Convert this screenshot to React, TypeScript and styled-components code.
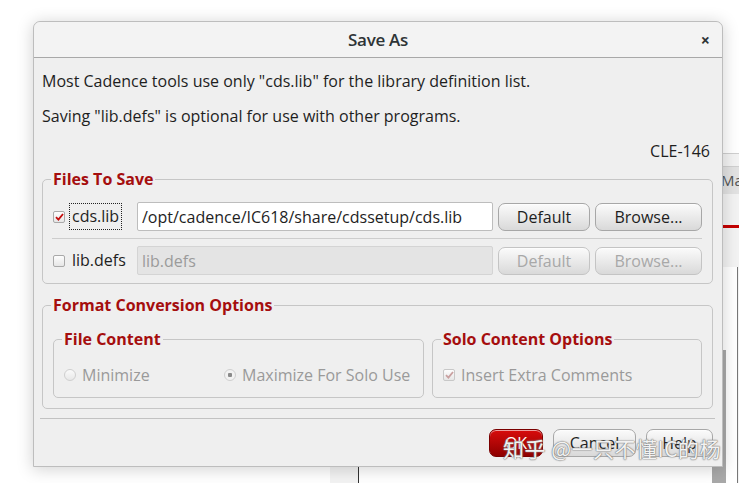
import styled, { createGlobalStyle } from 'styled-components';

const GlobalStyle = createGlobalStyle`
  html, body {
    margin: 0;
    padding: 0;
    background: #ffffff;
    overflow: hidden;
  }
  body {
    font-family: "Open Sans", "Noto Sans", sans-serif;
  }
`;

const Desktop = styled.div`
  position: relative;
  width: 739px;
  height: 483px;
  overflow: hidden;
  background: #ffffff;
`;

/* window behind the dialog, only its edges show */
const BackWindow = styled.div`
  position: absolute;
  left: 330px;
  top: 153px;
  width: 430px;
  height: 350px;
  background: #f3f3f3;
  border-top: 1px solid #cfcfcf;
  display: flex;
  flex-direction: column;
`;

const BackTabs = styled.div`
  display: flex;
  justify-content: flex-end;
  padding-top: 12px;
  height: 28px;
`;

const BackTab = styled.div`
  width: 120px;
  margin-right: -82px;
  background: #e2e2e2;
  border: 1px solid #d0d0d0;
  border-bottom: none;
  color: #555;
  font-size: 15px;
  line-height: 26px;
  padding-left: 1px;
`;

const BackRedLine = styled.div`
  height: 3px;
  margin-top: 31px;
  margin-left: 380px;
  background: #c40000;
`;

const BackList = styled.div`
  margin: 39px 0 0 28px;
  width: 378px;
  flex: 1;
  background: #ffffff;
  border-left: 1px solid #333;
  border-right: 1px solid #777;
  display: flex;
`;

const BackListItems = styled.div`
  flex: 1;
  padding: 180px 0 0 4px;
  font-size: 16px;
  line-height: 20px;
  color: #222;
`;

const BackScroll = styled.div`
  width: 14px;
  margin-right: 11px;
  background: #a9a9a9;
  margin-top: 83px;
`;

const Dialog = styled.div`
  position: absolute;
  left: 33px;
  top: 21px;
  width: 688px;
  background: #efefef;
  border: 1px solid #bdbdbd;
  border-radius: 7px 7px 0 0;
  box-shadow: 0 2px 16px 1px rgba(0, 0, 0, 0.17);
  display: flex;
  flex-direction: column;
`;

const TitleBar = styled.div`
  height: 35px;
  display: grid;
  grid-template-columns: 1fr auto 1fr;
  align-items: center;
  background: #f3f3f3;
  border-bottom: 1px solid #a8a8a8;
  border-radius: 7px 7px 0 0;
`;

const Title = styled.div`
  grid-column: 2;
  font-size: 17px;
  font-weight: 600;
  letter-spacing: -0.3px;
  color: #2e3436;
`;

const CloseButton = styled.div`
  justify-self: end;
  margin-right: 12px;
  font-size: 16px;
  font-weight: 700;
  color: #2e3436;
`;

const Body = styled.div`
  padding: 12px 9px 0 8px;
  display: flex;
  flex-direction: column;
`;

const Message = styled.div<{ $right?: boolean; $gap: number }>`
  font-size: 16px;
  line-height: 22px;
  color: #1e1e1e;
  text-align: ${(p) => (p.$right ? 'right' : 'left')};
  padding-right: ${(p) => (p.$right ? '3px' : '0')};
  margin-bottom: ${(p) => p.$gap}px;
`;

const Group = styled.fieldset<{ $pad: string }>`
  margin: 0;
  min-width: 0;
  border: 1px solid #c6c6c6;
  border-radius: 5px;
  padding: ${(p) => p.$pad};
`;

const Legend = styled.legend`
  padding: 0 2px;
  margin-left: -2px;
  font-size: 16px;
  font-weight: 700;
  line-height: 22px;
  color: #a50e0e;
`;

const FileRow = styled.div`
  display: grid;
  grid-template-columns: 79px 356px 92px 1fr;
  column-gap: 5px;
  align-items: center;
  height: 29px;
`;

const RowRule = styled.div`
  height: 1px;
  background: #cdcdcd;
  margin: 7px 0 7px -1px;
`;

const CheckLabel = styled.label<{ $disabled?: boolean }>`
  display: flex;
  align-items: center;
  gap: 4px;
  font-size: 16px;
  color: ${(p) => (p.$disabled ? '#9a9a9a' : '#1e1e1e')};
  white-space: nowrap;
`;

const Box = styled.span<{ $dim?: boolean }>`
  width: 10px;
  height: 10px;
  flex: none;
  border: 1px solid ${(p) => (p.$dim ? '#c8c8c8' : '#a9a9a9')};
  border-radius: 2px;
  background: linear-gradient(#fdfdfd, #e6e6e6);
  display: flex;
  align-items: center;
  justify-content: center;
`;

const Focus = styled.span<{ $focus?: boolean }>`
  padding: 2px 2px;
  line-height: 21px;
  border: 1px dotted ${(p) => (p.$focus ? '#222' : 'transparent')};
`;

const TextField = styled.div<{ $disabled?: boolean }>`
  box-sizing: border-box;
  height: 29px;
  padding: 0 4px;
  display: flex;
  align-items: center;
  font-size: 16px;
  color: ${(p) => (p.$disabled ? '#9b9b9b' : '#1e1e1e')};
  background: ${(p) => (p.$disabled ? '#e4e4e4' : '#ffffff')};
  border: 1px solid ${(p) => (p.$disabled ? '#d4d4d4' : '#bdbdbd')};
  border-radius: 2px;
  white-space: nowrap;
  overflow: hidden;
`;

const Button = styled.button<{ $disabled?: boolean; $primary?: boolean }>`
  height: 28px;
  box-sizing: border-box;
  padding: 0 14px;
  font-family: inherit;
  font-size: 16px;
  color: ${(p) => (p.$primary ? '#ffffff' : p.$disabled ? '#a8a8a8' : '#1e1e1e')};
  background: ${(p) =>
    p.$primary
      ? 'linear-gradient(#d80c0c, #8e0000)'
      : 'linear-gradient(#fbfbfb, #d9d9d9)'};
  border: 1px solid ${(p) => (p.$primary ? '#7a0000' : p.$disabled ? '#c4c4c4' : '#a7a7a7')};
  border-radius: 7px;
  box-shadow: inset 0 1px 0 rgba(255, 255, 255, 0.6);
  white-space: nowrap;
`;

const FooterButton = styled(Button)<{ $w: number }>`
  width: ${(p) => p.$w}px;
  padding: 0;
`;

const GroupGap = styled.div`
  height: 10px;
`;

const SubGroups = styled.div`
  display: grid;
  grid-template-columns: 371px 1fr;
  column-gap: 8px;
`;

const OptionRow = styled.div`
  display: flex;
  align-items: center;
  height: 22px;
`;

const RadioLabel = styled.label<{ $width?: number }>`
  display: flex;
  align-items: center;
  gap: 6px;
  width: ${(p) => (p.$width ? `${p.$width}px` : 'auto')};
  font-size: 16px;
  color: #9a9a9a;
  white-space: nowrap;
`;

const Radio = styled.span<{ $on?: boolean }>`
  width: 10px;
  height: 10px;
  flex: none;
  border-radius: 50%;
  border: 1px solid #cfcfcf;
  background: ${(p) =>
    p.$on
      ? 'radial-gradient(circle, #8a8a8a 0 2px, #f2f2f2 2.5px)'
      : 'linear-gradient(#fafafa, #e8e8e8)'};
`;

const Footer = styled.div`
  margin: 9px -2px 0 -2px;
  border-top: 1px solid #c2c2c2;
  padding: 10px 2px 9px 0;
  display: flex;
  justify-content: flex-end;
  gap: 10px;
`;

const Watermark = styled.div`
  position: absolute;
  left: 503px;
  top: 433px;
  font-family: "Noto Sans CJK SC", "Open Sans", sans-serif;
  font-size: 21px;
  letter-spacing: 0.5px;
  color: rgba(255, 255, 255, 0.92);
  text-shadow: 0 0 1px #777, 0 0 1px #777, 0 0 2px #999;
  white-space: nowrap;
  pointer-events: none;
`;

const Tick = ({ color }: { color: string }) => (
  <svg width="9" height="8" viewBox="0 0 9 8">
    <path d="M1 4.2 L3.4 6.6 L8 1" fill="none" stroke={color} strokeWidth="1.8" />
  </svg>
);

export default function App() {
  return (
    <Desktop>
      <GlobalStyle />
      <BackWindow>
        <BackTabs>
          <BackTab>Manager</BackTab>
        </BackTabs>
        <BackRedLine />
        <BackList>
          <BackListItems>cdsDefTechLib</BackListItems>
          <BackScroll />
        </BackList>
      </BackWindow>

      <Dialog>
        <TitleBar>
          <Title>Save As</Title>
          <CloseButton>×</CloseButton>
        </TitleBar>
        <Body>
          <Message $gap={13}>Most Cadence tools use only "cds.lib" for the library definition list.</Message>
          <Message $gap={13}>Saving "lib.defs" is optional for use with other programs.</Message>
          <Message $right $gap={6}>CLE-146</Message>

          <Group $pad="12px 10px 8px 10px">
            <Legend>Files To Save</Legend>
            <FileRow>
              <CheckLabel>
                <Box>
                  <Tick color="#c40d0d" />
                </Box>
                <Focus $focus>cds.lib</Focus>
              </CheckLabel>
              <TextField>/opt/cadence/IC618/share/cdssetup/cds.lib</TextField>
              <Button>Default</Button>
              <Button>Browse...</Button>
            </FileRow>
            <RowRule />
            <FileRow>
              <CheckLabel>
                <Box />
                <Focus>lib.defs</Focus>
              </CheckLabel>
              <TextField $disabled>lib.defs</TextField>
              <Button $disabled>Default</Button>
              <Button $disabled>Browse...</Button>
            </FileRow>
          </Group>

          <GroupGap />

          <Group $pad="12px 10px 10px 10px">
            <Legend>Format Conversion Options</Legend>
            <SubGroups>
              <Group $pad="14px 10px 11px 10px">
                <Legend>File Content</Legend>
                <OptionRow>
                  <RadioLabel $width={160}>
                    <Radio />
                    Minimize
                  </RadioLabel>
                  <RadioLabel>
                    <Radio $on />
                    Maximize For Solo Use
                  </RadioLabel>
                </OptionRow>
              </Group>
              <Group $pad="14px 10px 11px 10px">
                <Legend>Solo Content Options</Legend>
                <OptionRow>
                  <RadioLabel>
                    <Box $dim>
                      <Tick color="#c9a0a0" />
                    </Box>
                    Insert Extra Comments
                  </RadioLabel>
                </OptionRow>
              </Group>
            </SubGroups>
          </Group>

          <Footer>
            <FooterButton $primary $w={54}>OK</FooterButton>
            <FooterButton $w={83}>Cancel</FooterButton>
            <FooterButton $w={67}>Help</FooterButton>
          </Footer>
        </Body>
      </Dialog>

      <Watermark>知乎 @一只不懂IC的杨</Watermark>
    </Desktop>
  );
}
